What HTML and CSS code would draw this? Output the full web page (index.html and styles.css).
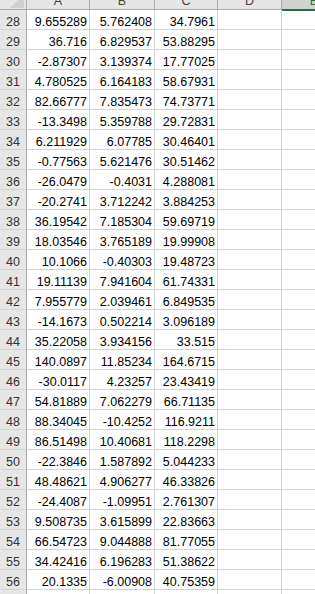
FILE: index.html
```html
<!DOCTYPE html>
<html>
<head>
<meta charset="utf-8">
<link rel="stylesheet" href="styles.css">
</head>
<body>
<div class="sheet">
  <div class="hd corner"></div>
  <div class="hd col"><span>A</span></div>
  <div class="hd col"><span>B</span></div>
  <div class="hd col"><span>C</span></div>
  <div class="hd col"><span>D</span></div>
  <div class="hd col sel"><span>E</span></div>

  <div class="rh">28</div><div class="c">9.655289</div><div class="c">5.762408</div><div class="c">34.7961</div><div class="c"></div><div class="c"></div>
  <div class="rh">29</div><div class="c">36.716</div><div class="c">6.829537</div><div class="c">53.88295</div><div class="c"></div><div class="c"></div>
  <div class="rh">30</div><div class="c">-2.87307</div><div class="c">3.139374</div><div class="c">17.77025</div><div class="c"></div><div class="c"></div>
  <div class="rh">31</div><div class="c">4.780525</div><div class="c">6.164183</div><div class="c">58.67931</div><div class="c"></div><div class="c"></div>
  <div class="rh">32</div><div class="c">82.66777</div><div class="c">7.835473</div><div class="c">74.73771</div><div class="c"></div><div class="c"></div>
  <div class="rh">33</div><div class="c">-13.3498</div><div class="c">5.359788</div><div class="c">29.72831</div><div class="c"></div><div class="c"></div>
  <div class="rh">34</div><div class="c">6.211929</div><div class="c">6.07785</div><div class="c">30.46401</div><div class="c"></div><div class="c"></div>
  <div class="rh">35</div><div class="c">-0.77563</div><div class="c">5.621476</div><div class="c">30.51462</div><div class="c"></div><div class="c"></div>
  <div class="rh">36</div><div class="c">-26.0479</div><div class="c">-0.4031</div><div class="c">4.288081</div><div class="c"></div><div class="c"></div>
  <div class="rh">37</div><div class="c">-20.2741</div><div class="c">3.712242</div><div class="c">3.884253</div><div class="c"></div><div class="c"></div>
  <div class="rh">38</div><div class="c">36.19542</div><div class="c">7.185304</div><div class="c">59.69719</div><div class="c"></div><div class="c"></div>
  <div class="rh">39</div><div class="c">18.03546</div><div class="c">3.765189</div><div class="c">19.99908</div><div class="c"></div><div class="c"></div>
  <div class="rh">40</div><div class="c">10.1066</div><div class="c">-0.40303</div><div class="c">19.48723</div><div class="c"></div><div class="c"></div>
  <div class="rh">41</div><div class="c">19.11139</div><div class="c">7.941604</div><div class="c">61.74331</div><div class="c"></div><div class="c"></div>
  <div class="rh">42</div><div class="c">7.955779</div><div class="c">2.039461</div><div class="c">6.849535</div><div class="c"></div><div class="c"></div>
  <div class="rh">43</div><div class="c">-14.1673</div><div class="c">0.502214</div><div class="c">3.096189</div><div class="c"></div><div class="c"></div>
  <div class="rh">44</div><div class="c">35.22058</div><div class="c">3.934156</div><div class="c">33.515</div><div class="c"></div><div class="c"></div>
  <div class="rh">45</div><div class="c">140.0897</div><div class="c">11.85234</div><div class="c">164.6715</div><div class="c"></div><div class="c"></div>
  <div class="rh">46</div><div class="c">-30.0117</div><div class="c">4.23257</div><div class="c">23.43419</div><div class="c"></div><div class="c"></div>
  <div class="rh">47</div><div class="c">54.81889</div><div class="c">7.062279</div><div class="c">66.71135</div><div class="c"></div><div class="c"></div>
  <div class="rh">48</div><div class="c">88.34045</div><div class="c">-10.4252</div><div class="c">116.9211</div><div class="c"></div><div class="c"></div>
  <div class="rh">49</div><div class="c">86.51498</div><div class="c">10.40681</div><div class="c">118.2298</div><div class="c"></div><div class="c"></div>
  <div class="rh">50</div><div class="c">-22.3846</div><div class="c">1.587892</div><div class="c">5.044233</div><div class="c"></div><div class="c"></div>
  <div class="rh">51</div><div class="c">48.48621</div><div class="c">4.906277</div><div class="c">46.33826</div><div class="c"></div><div class="c"></div>
  <div class="rh">52</div><div class="c">-24.4087</div><div class="c">-1.09951</div><div class="c">2.761307</div><div class="c"></div><div class="c"></div>
  <div class="rh">53</div><div class="c">9.508735</div><div class="c">3.615899</div><div class="c">22.83663</div><div class="c"></div><div class="c"></div>
  <div class="rh">54</div><div class="c">66.54723</div><div class="c">9.044888</div><div class="c">81.77055</div><div class="c"></div><div class="c"></div>
  <div class="rh">55</div><div class="c">34.42416</div><div class="c">6.196283</div><div class="c">51.38622</div><div class="c"></div><div class="c"></div>
  <div class="rh">56</div><div class="c">20.1335</div><div class="c">-6.00908</div><div class="c">40.75359</div><div class="c"></div><div class="c"></div>
  <div class="rh">57</div><div class="c"></div><div class="c"></div><div class="c"></div><div class="c"></div><div class="c"></div>
</div>
</body>
</html>
```

FILE: styles.css
```css
html, body {
  margin: 0;
  padding: 0;
  background: #ffffff;
  overflow: hidden;
  width: 315px;
  height: 594px;
}

.sheet {
  display: grid;
  grid-template-columns: 27px 63px 65px 63px 64px 64px;
  grid-template-rows: 10px;
  grid-auto-rows: 20px;
  font-family: "Liberation Sans", Arial, sans-serif;
  font-size: 12.5px;
  width: 346px;
}

.sheet > div {
  box-sizing: border-box;
  overflow: hidden;
  display: flex;
  align-items: flex-end;
  line-height: 13px;
  white-space: nowrap;
}

.hd {
  background: #e6e6e6;
  border-right: 1px solid #ababab;
  border-bottom: 1px solid #ababab;
  color: #444444;
  justify-content: center;
  padding-bottom: 1px;
}

.corner {
  position: relative;
}

.corner::after {
  content: "";
  position: absolute;
  right: 2px;
  bottom: 1px;
  width: 14px;
  height: 14px;
  background: #d0d0d0;
  clip-path: polygon(100% 0, 100% 100%, 0 100%);
}

.hd.sel {
  background: #d2d2d2;
  color: #217346;
  border-bottom: 1px solid #217346;
  box-shadow: 0 1px 0 #217346;
  border-right: none;
}

.rh {
  background: #e6e6e6;
  border-right: 1px solid #ababab;
  border-bottom: 1px solid #d4d4d4;
  color: #333333;
  justify-content: center;
}

.c {
  border-right: 1px solid #d4d4d4;
  border-bottom: 1px solid #d4d4d4;
  justify-content: flex-end;
  padding-right: 2px;
  color: #000000;
}
```
